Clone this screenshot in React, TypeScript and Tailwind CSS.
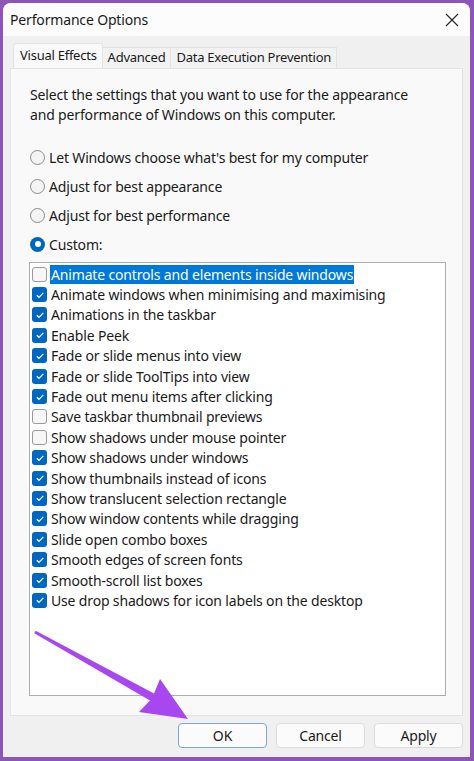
import { useState } from "react";

const font = { fontFamily: '"Segoe UI", "Noto Sans", "Open Sans", sans-serif' };

const effects: [string, boolean][] = [
  ["Animate controls and elements inside windows", false],
  ["Animate windows when minimising and maximising", true],
  ["Animations in the taskbar", true],
  ["Enable Peek", true],
  ["Fade or slide menus into view", true],
  ["Fade or slide ToolTips into view", true],
  ["Fade out menu items after clicking", true],
  ["Save taskbar thumbnail previews", false],
  ["Show shadows under mouse pointer", false],
  ["Show shadows under windows", true],
  ["Show thumbnails instead of icons", true],
  ["Show translucent selection rectangle", true],
  ["Show window contents while dragging", true],
  ["Slide open combo boxes", true],
  ["Smooth edges of screen fonts", true],
  ["Smooth-scroll list boxes", true],
  ["Use drop shadows for icon labels on the desktop", true],
];

const radios = [
  "Let Windows choose what's best for my computer",
  "Adjust for best appearance",
  "Adjust for best performance",
  "Custom:",
];

function Radio({ on }: { on: boolean }) {
  return on ? (
    <span className="flex h-[15px] w-[15px] items-center justify-center rounded-full bg-[#0067c0]">
      <span className="h-[6px] w-[6px] rounded-full bg-white" />
    </span>
  ) : (
    <span className="h-[15px] w-[15px] rounded-full border border-[#8a8a8a] bg-[#f4f4f4]" />
  );
}

function Check({ on }: { on: boolean }) {
  return on ? (
    <span className="flex h-[15px] w-[15px] items-center justify-center rounded-[3px] bg-[#0067c0]">
      <svg width="10" height="10" viewBox="0 0 10 10">
        <path d="M1.8 5.2 L4 7.3 L8.3 2.8" fill="none" stroke="white" strokeWidth="1.2" />
      </svg>
    </span>
  ) : (
    <span className="h-[15px] w-[15px] rounded-[3px] border border-[#9a9a9a] bg-[#f7f7f7]" />
  );
}

export default function App() {
  const [mode, setMode] = useState(3);
  const [checks, setChecks] = useState(effects.map((e) => e[1]));

  return (
    <div
      className="relative h-[761px] w-[474px] bg-[#8d55b8] pb-[4px] pl-[3px] pr-[4px] pt-[3px] text-[14px] tracking-[-0.16px] text-[#1a1a1a]"
      style={font}
    >
      <div className="flex h-full flex-col overflow-hidden rounded-t-[8px] bg-[#f0f0f0]">
        <div className="flex h-[33px] items-center justify-between bg-[#fcfcfc] pl-[7px] pr-[11px]">
          <span className="text-[14px]">Performance Options</span>
          <svg width="14" height="14" viewBox="0 0 14 14">
            <path d="M1 1 L13 13 M13 1 L1 13" stroke="#222" strokeWidth="1.1" />
          </svg>
        </div>

        <div className="flex flex-1 flex-col px-[7px] pt-[7px]">
          <div className="flex h-[25px] items-end pl-[3px] text-[13px] tracking-[-0.25px]">
            <div className="flex h-[25px] items-center rounded-t-[3px] border border-b-0 border-[#e3e3e3] bg-[#f9f9f9] pl-[6px] pr-[5px]">
              Visual Effects
            </div>
            <div className="flex h-[21px] items-center border border-b-0 border-l-0 border-[#e3e3e3] bg-[#f2f2f2] px-[5px]">
              Advanced
            </div>
            <div className="flex h-[21px] items-center border border-b-0 border-l-0 border-[#e3e3e3] bg-[#f2f2f2] px-[5px]">
              Data Execution Prevention
            </div>
          </div>

          <div className="flex flex-1 flex-col border border-[#e3e3e3] bg-[#f9f9f9] pb-[19px] pl-[18px] pr-[16px] pt-[16px]">
            <p className="pl-[1px] leading-[20px]">
              Select the settings that you want to use for the appearance
              <br />
              and performance of Windows on this computer.
            </p>

            <div className="mt-[22px] flex flex-col gap-[9px]">
              {radios.map((r, i) => (
                <label
                  key={r}
                  className="flex h-[20px] cursor-default items-center gap-[4px] pl-[1px]"
                  onClick={() => setMode(i)}
                >
                  <Radio on={mode === i} />
                  <span>{r}</span>
                </label>
              ))}
            </div>

            <div className="mt-[8px] flex-1 border border-[#adadad] bg-white pl-[2px] pt-[1px]">
              {effects.map(([name], i) => (
                <div
                  key={name}
                  className="flex h-[20.4px] cursor-default items-center gap-[3px]"
                  onClick={() =>
                    setChecks((c) => c.map((v, j) => (j === i ? !v : v)))
                  }
                >
                  <Check on={checks[i]} />
                  <span
                    className={
                      i === 0
                        ? "bg-[#0078d7] px-[1px] leading-[19px] text-white"
                        : "px-[1px] leading-[19px]"
                    }
                  >
                    {name}
                  </span>
                </div>
              ))}
            </div>
          </div>

          <div className="flex h-[41px] items-center justify-end gap-[9px] pb-[2px]">
            <button className="h-[25px] w-[89px] rounded-[4px] border border-[#7fa7c9] bg-[#fbfbfb] text-[14px]">
              OK
            </button>
            <button className="h-[25px] w-[89px] rounded-[4px] border border-[#dcdcdc] bg-[#fbfbfb] text-[14px]">
              Cancel
            </button>
            <button className="h-[25px] w-[89px] rounded-[4px] border border-[#dcdcdc] bg-[#fbfbfb] text-[14px]">
              Apply
            </button>
          </div>
        </div>
      </div>

      <svg className="pointer-events-none absolute left-0 top-0" width="474" height="761">
        <polygon
          points="35.7,630.7 154,693.5 160,679 188,719 139,712 150,700.5 34.3,633.3"
          fill="#a846f0"
        />
      </svg>
    </div>
  );
}
